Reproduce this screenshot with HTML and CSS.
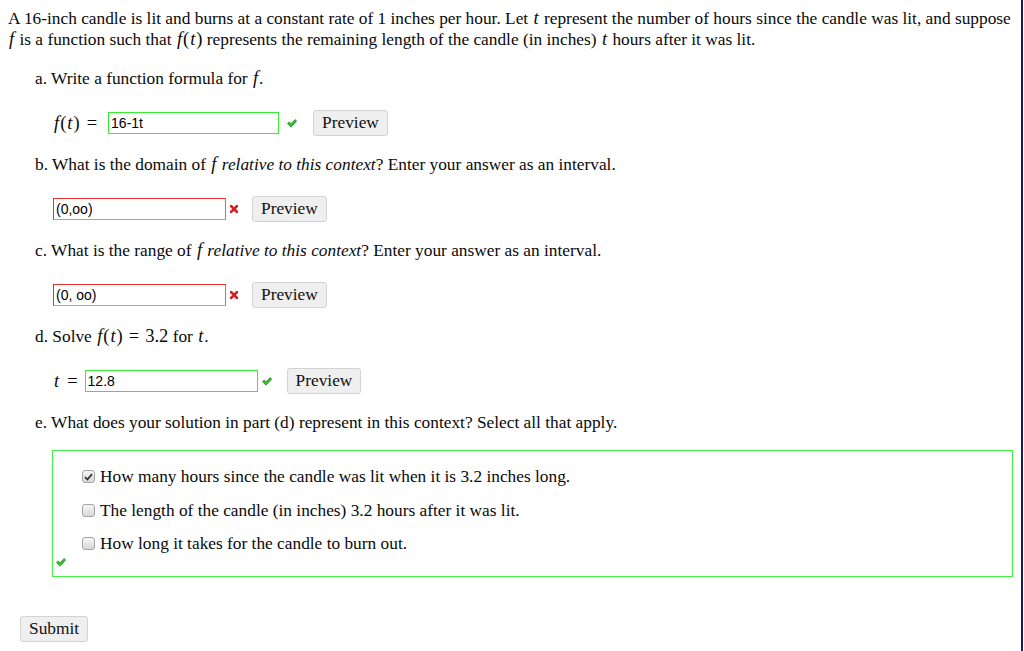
FILE: index.html
```html
<!DOCTYPE html>
<html lang="en">
<head>
<meta charset="utf-8">
<title>Candle problem</title>
<link rel="stylesheet" href="styles.css">
</head>
<body>
<div class="page">
  <p class="intro">A 16-inch candle is lit and burns at a constant rate of 1 inches per hour. Let <span class="m"><i>t</i></span> represent the number of hours since the candle was lit, and suppose<br><span class="m"><i>f</i></span> is a function such that <span class="m"><i>f</i>(<i>t</i>)</span> represents the remaining length of the candle (in inches) <span class="m"><i>t</i></span> hours after it was lit.</p>

  <p class="part">a. Write a function formula for <span class="m"><i>f</i></span>.</p>
  <div class="row">
    <span class="m lbl lbl-f"><i>f</i>(<i>t</i>)<span class="eq">=</span></span>
    <input class="ans ok w171" type="text" value="16-1t">
    <svg class="mark ok-mark" width="10" height="9" viewBox="0 0 10 9"><polygon points="0.5,4.6 2.3,3 4,4.8 8.2,0.5 9.6,2.1 4,8.3" fill="#33c033" stroke="#1d7a1d" stroke-width="0.7"/></svg>
    <button class="btn">Preview</button>
  </div>

  <p class="part">b. What is the domain of <span class="m"><i>f</i></span> <i>relative to this context</i>? Enter your answer as an interval.</p>
  <div class="row">
    <input class="ans bad w173" type="text" value="(0,oo)">
    <svg class="mark bad-mark" width="8" height="8" viewBox="0 0 8 8"><path d="M1 1 L7 7 M7 1 L1 7" stroke="#d91c1c" stroke-width="2.6" stroke-linecap="square"/></svg>
    <button class="btn">Preview</button>
  </div>

  <p class="part">c. What is the range of <span class="m"><i>f</i></span> <i>relative to this context</i>? Enter your answer as an interval.</p>
  <div class="row">
    <input class="ans bad w173" type="text" value="(0, oo)">
    <svg class="mark bad-mark" width="8" height="8" viewBox="0 0 8 8"><path d="M1 1 L7 7 M7 1 L1 7" stroke="#d91c1c" stroke-width="2.6" stroke-linecap="square"/></svg>
    <button class="btn">Preview</button>
  </div>

  <p class="part">d. Solve <span class="m"><i>f</i>(<i>t</i>)<span class="eq">=</span>3.2</span> for <span class="m"><i>t</i></span>.</p>
  <div class="row">
    <span class="m lbl"><i>t</i><span class="eq">=</span></span>
    <input class="ans ok w173" type="text" value="12.8">
    <svg class="mark ok-mark2" width="10" height="9" viewBox="0 0 10 9"><polygon points="0.5,4.6 2.3,3 4,4.8 8.2,0.5 9.6,2.1 4,8.3" fill="#33c033" stroke="#1d7a1d" stroke-width="0.7"/></svg>
    <button class="btn">Preview</button>
  </div>

  <p class="part">e. What does your solution in part (d) represent in this context? Select all that apply.</p>
  <div class="choices">
    <label class="opt"><span class="cb checked"><svg width="9" height="8" viewBox="0 0 9 8"><path d="M1 4.2 L3.4 6.5 L8 1.2" fill="none" stroke="#333" stroke-width="1.8"/></svg></span>How many hours since the candle was lit when it is 3.2 inches long.</label>
    <label class="opt"><span class="cb"></span>The length of the candle (in inches) 3.2 hours after it was lit.</label>
    <label class="opt"><span class="cb"></span>How long it takes for the candle to burn out.</label>
    <svg class="box-mark" width="10" height="9" viewBox="0 0 10 9"><polygon points="0.5,4.6 2.3,3 4,4.8 8.2,0.5 9.6,2.1 4,8.3" fill="#33c033" stroke="#1d7a1d" stroke-width="0.7"/></svg>
  </div>

  <button class="btn submit">Submit</button>
</div>
</body>
</html>
```
FILE: styles.css
```css
html, body {
  margin: 0;
  padding: 0;
  background: #fff;
}
.page {
  box-sizing: border-box;
  width: 1023px;
  min-height: 651px;
  padding: 8px 8px 0 8px;
  border-right: 2px solid #1c1c5a;
  font-family: "Liberation Serif", "Times New Roman", serif;
  font-size: 17.33px;
  line-height: 21px;
  color: #0a0a0a;
}
p { margin: 0; }
.intro { white-space: nowrap; }
.m {
  font-family: "Liberation Serif", "Times New Roman", serif;
  font-size: 18.5px;
}
.m i { font-style: italic; padding: 0 1px; }
.eq { margin: 0 6px; font-style: normal; }
.lbl .eq { margin: 0 7px; }
.lbl-f { margin-right: 4px; }
.part {
  margin-top: 18px;
  margin-left: 27px;
}
.row {
  display: flex;
  align-items: center;
  height: 26px;
  margin-left: 45px;
  margin-top: 21px;
}
.lbl { white-space: nowrap; }
.ans {
  box-sizing: border-box;
  height: 22px;
  margin: 0;
  padding: 0 2px;
  font-family: "Liberation Sans", Arial, sans-serif;
  font-size: 14px;
  color: #000;
  background: #fff;
  border: 1px solid #33ee33;
  border-radius: 0;
  outline: none;
}
.ans.bad {
  border: 1px solid #e83030;
  border-bottom-color: #ff8080;
  border-right-color: #f06060;
}
.w171 { width: 171px; }
.w173 { width: 173px; }
.mark { flex: none; }
.ok-mark { margin-left: 8px; margin-right: 16px; }
.ok-mark2 { margin-left: 4px; margin-right: 15px; }
.bad-mark { margin-left: 4px; margin-right: 14px; }
.btn {
  box-sizing: border-box;
  height: 26px;
  padding: 0 8px;
  font-family: "Liberation Serif", "Times New Roman", serif;
  font-size: 17.33px;
  color: #111;
  background: #efefef;
  border: 1px solid #d3d3d3;
  border-radius: 3px;
}
.choices {
  position: relative;
  box-sizing: border-box;
  width: 961px;
  height: 127px;
  margin-top: 17px;
  margin-left: 44px;
  padding: 15px 0 0 29px;
  border: 1px solid #44ee44;
  display: flex;
  flex-direction: column;
  gap: 12.5px;
}
.opt {
  display: flex;
  align-items: center;
  height: 21px;
}
.cb {
  box-sizing: border-box;
  display: inline-flex;
  align-items: center;
  justify-content: center;
  width: 13px;
  height: 13px;
  margin-right: 5px;
  border: 1px solid #a4a4a4;
  border-radius: 3px;
  background: linear-gradient(#f6f6f6, #d8d8d8);
}
.box-mark {
  position: absolute;
  left: 3px;
  bottom: 9px;
}
.submit {
  display: block;
  margin-top: 39px;
  margin-left: 12px;
}
```
